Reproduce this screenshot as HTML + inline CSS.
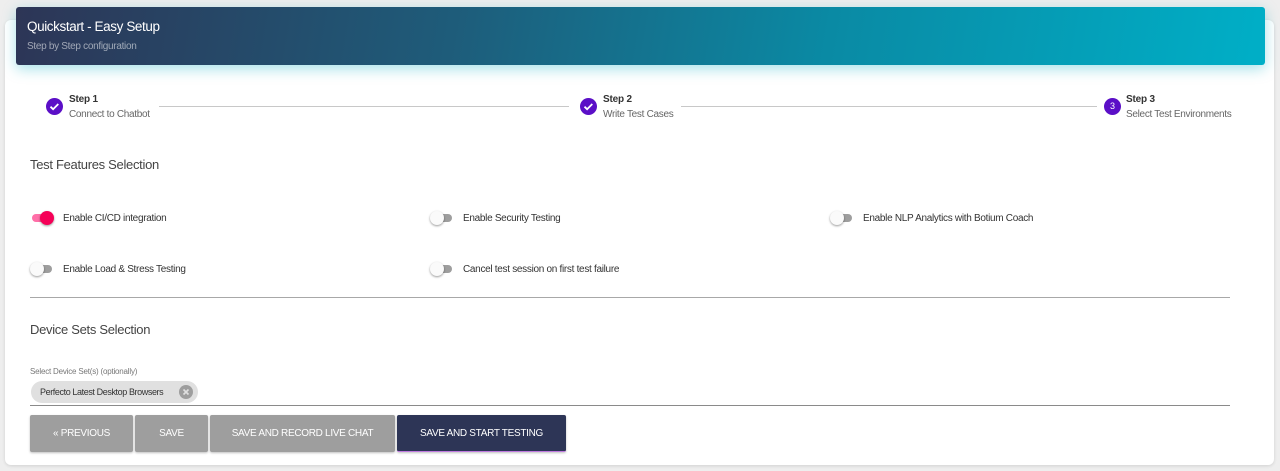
<!DOCTYPE html>
<html><head><meta charset="utf-8"><style>
*{box-sizing:border-box;margin:0;padding:0}
html,body{width:1280px;height:471px;overflow:hidden;background:#eeeeee;font-family:"Liberation Sans",sans-serif;position:relative}
.card{position:absolute;left:5px;top:20px;width:1269px;height:445px;background:#fff;border-radius:6px;box-shadow:0 1px 3px rgba(0,0,0,.12)}
.hdr{position:absolute;left:16px;top:7px;width:1249px;height:58px;border-radius:3px;background:linear-gradient(100deg,#2d3556 0%,#1e5c7a 35%,#0a8aa4 65%,#00afc7 100%);box-shadow:0 4px 14px rgba(0,172,193,.35)}
.hdr .t{position:absolute;left:11px;top:12px;color:#fff;font-size:13.5px;letter-spacing:-.4px}
.hdr .s{position:absolute;left:11px;top:34px;color:rgba(255,255,255,.55);font-size:10px;letter-spacing:-.3px}
.abs{position:absolute}
.stepc{position:absolute;width:17px;height:17px;border-radius:50%;background:#5b0fc7;color:#fff;font-size:9px;text-align:center;line-height:17px}
.stl{position:absolute;font-size:10px;font-weight:bold;color:#333;letter-spacing:-.2px}
.sts{position:absolute;font-size:10px;color:#666;letter-spacing:-.3px}
.line{position:absolute;height:1px;background:#c8c8c8;top:106px}
.h{position:absolute;font-size:13px;color:#444;letter-spacing:-.3px}
.lbl{position:absolute;font-size:10px;color:#333;letter-spacing:-.3px}
.tg{position:absolute;width:22px;height:10px}
.tg .tr{position:absolute;left:1px;top:1px;width:20px;height:8px;border-radius:4px;background:#9e9e9e}
.tg .th{position:absolute;left:-1px;top:-2px;width:14px;height:14px;border-radius:50%;background:#fafafa;box-shadow:0 1px 2px rgba(0,0,0,.4)}
.tg.on .tr{background:#ff6fa8}
.tg.on .th{left:9px;background:#f50057}
.btn{position:absolute;top:415px;height:37px;background:#9e9e9e;color:#fff;font-size:10px;text-align:center;line-height:37px;border-radius:2px;box-shadow:0 1px 2px rgba(0,0,0,.25);letter-spacing:-.3px}
</style></head><body>
<div class="card"></div>
<div class="hdr"><div class="t">Quickstart - Easy Setup</div><div class="s">Step by Step configuration</div></div>

<div class="stepc" style="left:46px;top:98px"><svg width="17" height="17" viewBox="0 0 17 17"><path d="M4.5 8.7l2.6 2.5 5.2-5.2" stroke="#fff" stroke-width="1.8" fill="none"/></svg></div>
<div class="stl" style="left:69px;top:94px">Step 1</div>
<div class="sts" style="left:69px;top:109px">Connect to Chatbot</div>
<div class="line" style="left:159px;width:410px"></div>
<div class="stepc" style="left:580px;top:98px"><svg width="17" height="17" viewBox="0 0 17 17"><path d="M4.5 8.7l2.6 2.5 5.2-5.2" stroke="#fff" stroke-width="1.8" fill="none"/></svg></div>
<div class="stl" style="left:603px;top:94px">Step 2</div>
<div class="sts" style="left:603px;top:109px">Write Test Cases</div>
<div class="line" style="left:681px;width:416px"></div>
<div class="stepc" style="left:1104px;top:98px">3</div>
<div class="stl" style="left:1126px;top:94px">Step 3</div>
<div class="sts" style="left:1126px;top:109px">Select Test Environments</div>

<div class="h" style="left:30px;top:157px">Test Features Selection</div>

<div class="tg on" style="left:31px;top:213px"><div class="tr"></div><div class="th"></div></div>
<div class="lbl" style="left:63px;top:213px">Enable CI/CD integration</div>
<div class="tg" style="left:431px;top:213px"><div class="tr"></div><div class="th"></div></div>
<div class="lbl" style="left:463px;top:213px">Enable Security Testing</div>
<div class="tg" style="left:831px;top:213px"><div class="tr"></div><div class="th"></div></div>
<div class="lbl" style="left:863px;top:213px">Enable NLP Analytics with Botium Coach</div>
<div class="tg" style="left:31px;top:264px"><div class="tr"></div><div class="th"></div></div>
<div class="lbl" style="left:63px;top:264px">Enable Load &amp; Stress Testing</div>
<div class="tg" style="left:431px;top:264px"><div class="tr"></div><div class="th"></div></div>
<div class="lbl" style="left:463px;top:264px">Cancel test session on first test failure</div>

<div class="abs" style="left:30px;top:297px;width:1200px;height:1px;background:#a8a8a8"></div>
<div class="h" style="left:30px;top:322px">Device Sets Selection</div>
<div class="abs" style="left:30px;top:367px;font-size:8px;color:#777;letter-spacing:-.2px">Select Device Set(s) (optionally)</div>
<div class="abs" style="left:31px;top:381px;width:167px;height:22px;border-radius:11px;background:#e0e0e0;font-size:9px;color:#333;line-height:22px;padding-left:9px;letter-spacing:-.4px">Perfecto Latest Desktop Browsers</div>
<div class="abs" style="left:179px;top:385px;width:14px;height:14px;border-radius:50%;background:#9e9e9e"><svg width="14" height="14" viewBox="0 0 14 14"><path d="M4.5 4.5l5 5M9.5 4.5l-5 5" stroke="#e0e0e0" stroke-width="1.6"/></svg></div>
<div class="abs" style="left:30px;top:405px;width:1200px;height:1px;background:#8a8a8a"></div>

<div class="btn" style="left:30px;width:103px">« PREVIOUS</div>
<div class="btn" style="left:135px;width:73px">SAVE</div>
<div class="btn" style="left:210px;width:185px">SAVE AND RECORD LIVE CHAT</div>
<div class="btn" style="left:397px;width:169px;background:#2d3556;border-bottom:1px solid #c07be0">SAVE AND START TESTING</div>
</body></html>
